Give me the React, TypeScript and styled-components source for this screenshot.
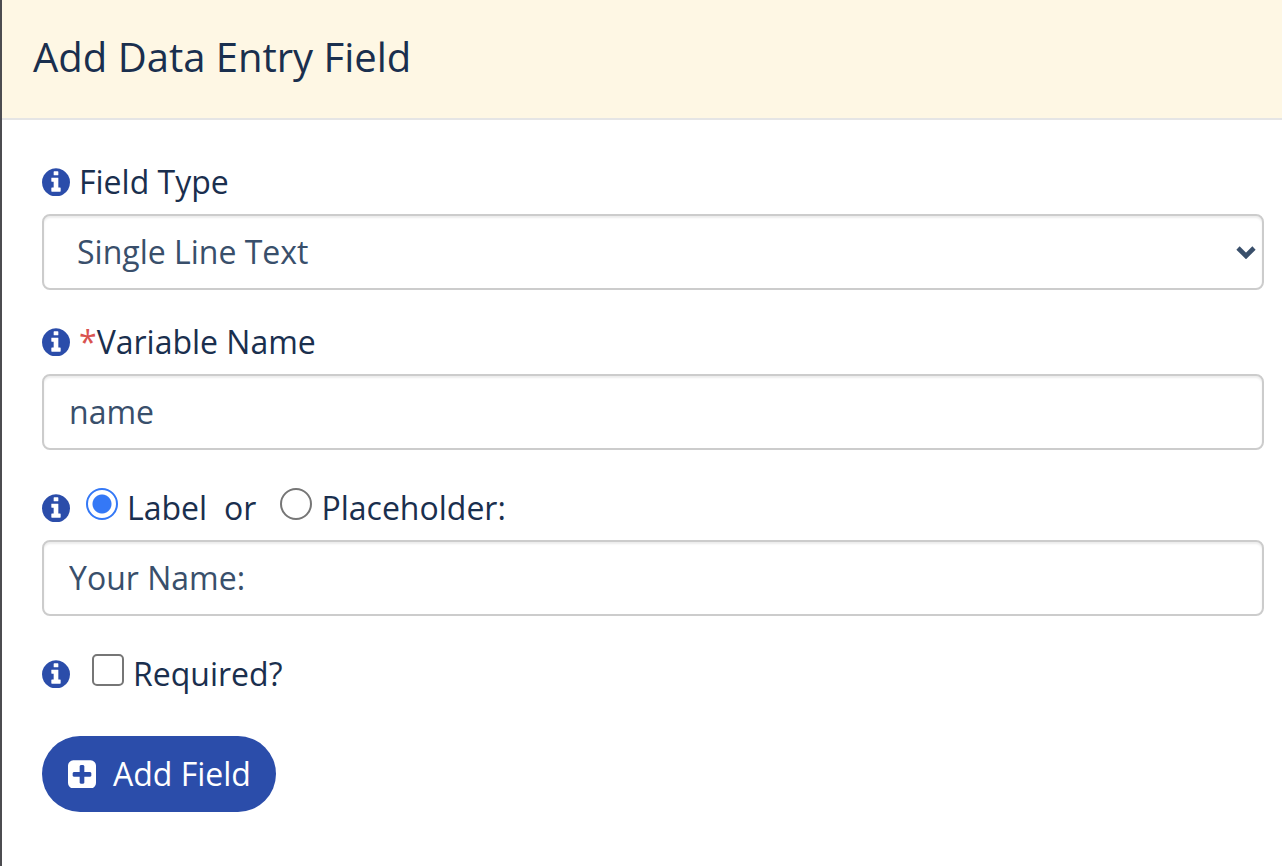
import React, { useState } from "react";
import styled, { createGlobalStyle } from "styled-components";

const GlobalStyle = createGlobalStyle`
  *, *::before, *::after { box-sizing: border-box; }
  body {
    margin: 0;
    background: #fff;
    color: #1a2f4e;
    font-family: "Open Sans", "Noto Sans", sans-serif;
    font-size: 32px;
    line-height: 44px;
  }
`;

const Dialog = styled.section`
  min-height: 100vh;
  border-left: 2px solid #4c4c50;
  background: #fff;
`;

const Header = styled.header`
  padding: 31px 31px 35px;
  background: #fef7e4;
  border-bottom: 2px solid #e5e5e5;
`;

const Title = styled.h1`
  margin: 0;
  font-size: 40px;
  font-weight: 400;
  line-height: 52px;
`;

const Form = styled.form`
  padding: 40px 18px 40px 40px;
`;

const Field = styled.div<{ $gap: number }>`
  display: flex;
  flex-direction: column;
  gap: 10px;
  margin-bottom: ${(p) => p.$gap}px;
`;

const Caption = styled.div`
  display: flex;
  align-items: center;
`;

const Icon = styled.svg`
  flex: none;
  width: 28px;
  height: 28px;
  fill: currentColor;
`;

const InfoButton = styled.button`
  display: flex;
  padding: 0;
  margin-right: 9px;
  border: 0;
  background: none;
  color: #2b4daa;
`;

const Star = styled.span`
  color: #d9534f;
`;

const controlStyle = `
  display: block;
  width: 100%;
  height: 76px;
  border: 2px solid #ccc;
  border-radius: 8px;
  background-color: #fff;
  box-shadow: inset 0 2px 2px rgba(0, 0, 0, 0.075);
  color: #394f6b;
  font: inherit;
  outline: none;
`;

const TextInput = styled.input`
  ${controlStyle}
  padding: 0 25px 2px;
`;

const SelectWrap = styled.div`
  display: grid;
  align-items: center;
  & > * { grid-area: 1 / 1; }
`;

const Select = styled.select`
  ${controlStyle}
  appearance: none;
  padding: 0 40px 0 33px;
`;

const Chevron = styled.svg`
  justify-self: end;
  width: 20px;
  height: 14px;
  margin-right: 8px;
  fill: none;
  stroke: #394f6b;
  stroke-width: 4.6;
  pointer-events: none;
`;

const Choice = styled.label<{ $indent: number }>`
  display: flex;
  align-items: center;
  gap: 9px;
  margin-left: ${(p) => p.$indent}px;
`;

const Tick = styled.input`
  appearance: none;
  flex: none;
  width: 32px;
  height: 32px;
  margin: 0 0 8px;
  border: 2px solid #767676;
  border-radius: ${(p) => (p.type === "radio" ? "50%" : "5px")};
  background: #fff;

  &[type="radio"]:checked {
    border-color: #3478f6;
    background: radial-gradient(circle, #3478f6 9px, #fff 10px);
  }
  &[type="checkbox"]:checked {
    border-color: #3478f6;
    background: #3478f6;
    box-shadow: inset 0 0 0 5px #fff;
  }
`;

const Or = styled.span`
  margin-left: 17px;
`;

const AddButton = styled.button`
  display: inline-flex;
  align-items: center;
  gap: 17px;
  height: 76px;
  padding: 0 25px 0 26px;
  border: 0;
  border-radius: 38px;
  background: #2b4daa;
  color: #fff;
  font: inherit;
`;

function Info({ about }: { about: string }) {
  return (
    <InfoButton type="button" aria-label={`Help: ${about}`}>
      <Icon viewBox="0 108 1536 1536" aria-hidden="true">
        <path d="M1024 1376v-160q0-14-9-23t-23-9h-96v-512q0-14-9-23t-23-9h-320q-14 0-23 9t-9 23v160q0 14 9 23t23 9h96v320h-96q-14 0-23 9t-9 23v160q0 14 9 23t23 9h448q14 0 23-9t9-23zm-128-896v-160q0-14-9-23t-23-9h-192q-14 0-23 9t-9 23v160q0 14 9 23t23 9h192q14 0 23-9t9-23zm640 416q0 209-103 385.5t-279.5 279.5-385.5 103-385.5-103-279.5-279.5-103-385.5 103-385.5 279.5-279.5 385.5-103 385.5 103 279.5 279.5 103 385.5z" />
      </Icon>
    </InfoButton>
  );
}

export default function App() {
  const [type, setType] = useState("Single Line Text");
  const [name, setName] = useState("name");
  const [mode, setMode] = useState("label");
  const [text, setText] = useState("Your Name:");
  const [required, setRequired] = useState(false);

  return (
    <>
      <GlobalStyle />
      <Dialog aria-labelledby="dialog-title">
        <Header>
          <Title id="dialog-title">Add Data Entry Field</Title>
        </Header>
        <Form onSubmit={(e) => e.preventDefault()}>
          <Field $gap={30}>
            <Caption>
              <Info about="field type" />
              <label htmlFor="field-type">Field Type</label>
            </Caption>
            <SelectWrap>
              <Select id="field-type" value={type} onChange={(e) => setType(e.target.value)}>
                <option>Single Line Text</option>
              </Select>
              <Chevron viewBox="0 0 20 14" aria-hidden="true">
                <path d="M2 3 10 11 18 3" />
              </Chevron>
            </SelectWrap>
          </Field>

          <Field $gap={36}>
            <Caption>
              <Info about="variable name" />
              <label htmlFor="variable-name">
                <Star>*</Star>Variable Name
              </label>
            </Caption>
            <TextInput id="variable-name" value={name} onChange={(e) => setName(e.target.value)} />
          </Field>

          <Field $gap={36}>
            <Caption>
              <Info about="label or placeholder" />
              <Choice $indent={7}>
                <Tick type="radio" name="mode" checked={mode === "label"} onChange={() => setMode("label")} />
                Label
              </Choice>
              <Or>or</Or>
              <Choice $indent={24}>
                <Tick
                  type="radio"
                  name="mode"
                  checked={mode === "placeholder"}
                  onChange={() => setMode("placeholder")}
                />
                Placeholder:
              </Choice>
            </Caption>
            <TextInput aria-label="Label text" value={text} onChange={(e) => setText(e.target.value)} />
          </Field>

          <Field $gap={40}>
            <Caption>
              <Info about="required" />
              <Choice $indent={13}>
                <Tick type="checkbox" checked={required} onChange={(e) => setRequired(e.target.checked)} />
                Required?
              </Choice>
            </Caption>
          </Field>

          <AddButton type="submit">
            <Icon viewBox="0 108 1536 1536" aria-hidden="true">
              <path d="M1280 960v-128q0-26-19-45t-45-19h-320v-320q0-26-19-45t-45-19h-128q-26 0-45 19t-19 45v320h-320q-26 0-45 19t-19 45v128q0 26 19 45t45 19h320v320q0 26 19 45t45 19h128q26 0 45-19t19-45v-320h320q26 0 45-19t19-45zm256-544v960q0 119-84.5 203.5t-203.5 84.5h-960q-119 0-203.5-84.5t-84.5-203.5v-960q0-119 84.5-203.5t203.5-84.5h960q119 0 203.5 84.5t84.5 203.5z" />
            </Icon>
            Add Field
          </AddButton>
        </Form>
      </Dialog>
    </>
  );
}
